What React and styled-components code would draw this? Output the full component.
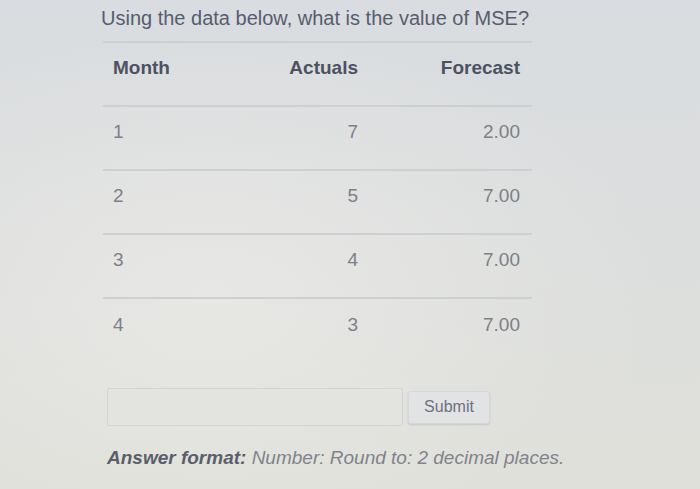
import React from 'react';
import styled, { createGlobalStyle } from 'styled-components';

const rows = [
    { month: '1', actual: '7', forecast: '2.00' },
    { month: '2', actual: '5', forecast: '7.00' },
    { month: '3', actual: '4', forecast: '7.00' },
    { month: '4', actual: '3', forecast: '7.00' },
];

const GlobalStyle = createGlobalStyle`
    html, body {
        margin: 0;
        padding: 0;
        height: 100%;
    }
    body {
        font-family: "Liberation Sans", Arial, sans-serif;
        background: linear-gradient(180deg, #d9dce0 0%, #dcdedd 55%, #dfe0d9 100%);
        overflow: hidden;
    }
`;

const Page = styled.div`
    width: 700px;
    height: 489px;
    padding: 5px 0 0 101px;
    box-sizing: border-box;
    background: radial-gradient(ellipse at 30% 60%, rgba(236,236,232,0.7) 0%, rgba(236,236,232,0) 65%);
`;

const Question = styled.p`
    margin: 0;
    font-size: 20px;
    line-height: 26px;
    color: #575c6e;
`;

const Table = styled.div`
    margin: 10px 0 0 2px;
    width: 429px;
    border-top: 2px solid #cdd0d3;
`;

const Row = styled.div`
    display: grid;
    grid-template-columns: 137px 130px 162px;
    height: 64px;
    align-items: center;
    border-bottom: ${p => (p.$last ? 'none' : '2px solid #cdd0d3')};
    box-sizing: border-box;
`;

const Cell = styled.div`
    padding: 0 12px 0 10px;
    margin-top: -12px;
    text-align: ${p => (p.$left ? 'left' : 'right')};
    font-size: 19px;
    font-weight: ${p => (p.$head ? 700 : 400)};
    color: ${p => (p.$head ? '#4d5263' : '#7c7f88')};
`;

const AnswerRow = styled.div`
    display: flex;
    align-items: center;
    gap: 5px;
    margin: 25px 0 0 6px;
`;

const Input = styled.div`
    width: 296px;
    height: 38px;
    box-sizing: border-box;
    border: 1px solid #d2d4d0;
    border-radius: 2px;
    background: #e3e4df;
`;

const Button = styled.button`
    width: 82px;
    height: 33px;
    border: 1px solid #d6d8d8;
    border-radius: 3px;
    background: #e1e3e4;
    box-shadow: 0 1px 2px rgba(0, 0, 0, 0.12);
    font-family: "Liberation Sans", Arial, sans-serif;
    font-size: 16px;
    color: #6c7182;
    padding: 0;
`;

const Format = styled.p`
    margin: 21px 0 0 6px;
    font-size: 19px;
    font-style: italic;
    color: #80838c;
    b {
        color: #5a5e6c;
    }
`;

const App = () => {
    return (
        <Page>
            <GlobalStyle />
            <Question>Using the data below, what is the value of MSE?</Question>
            <Table>
                <Row>
                    <Cell $head $left>Month</Cell>
                    <Cell $head>Actuals</Cell>
                    <Cell $head>Forecast</Cell>
                </Row>
                {rows.map((r, i) => (
                    <Row key={i} $last={i === rows.length - 1}>
                        <Cell $left>{r.month}</Cell>
                        <Cell>{r.actual}</Cell>
                        <Cell>{r.forecast}</Cell>
                    </Row>
                ))}
            </Table>
            <AnswerRow>
                <Input />
                <Button>Submit</Button>
            </AnswerRow>
            <Format>
                <b>Answer format:</b> Number: Round to: 2 decimal places.
            </Format>
        </Page>
    );
};

export default App;
